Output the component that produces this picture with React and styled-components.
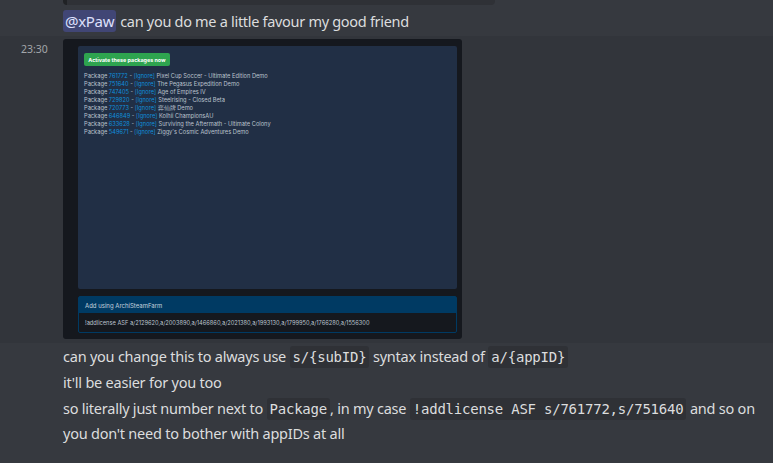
import React from 'react';
import styled, { createGlobalStyle } from 'styled-components';

const GlobalStyle = createGlobalStyle`
  html, body { margin: 0; padding: 0; background: #36393f; }
  body { width: 773px; height: 463px; overflow: hidden; font-family: "Noto Sans", sans-serif; }
`;

const packages = [
  { id: '761772', name: 'Pixel Cup Soccer - Ultimate Edition Demo' },
  { id: '751640', name: 'The Pegasus Expedition Demo' },
  { id: '747405', name: 'Age of Empires IV' },
  { id: '729820', name: 'Steelrising - Closed Beta' },
  { id: '720773', name: '弈仙牌 Demo' },
  { id: '646849', name: 'Kolhii ChampionsAU' },
  { id: '633628', name: 'Surviving the Aftermath - Ultimate Colony' },
  { id: '549671', name: "Ziggy's Cosmic Adventures Demo" },
];

const Page = styled.div`
  width: 773px;
  height: 463px;
  overflow: hidden;
  display: flex;
  flex-direction: column;
  color: #dcddde;
`;

const TopRow = styled.div`
  padding: 0 0 0 63px;
`;

const CutoffEmbed = styled.div`
  width: 432px;
  height: 5px;
  box-sizing: border-box;
  background: #2f3136;
  border-left: 4px solid #202225;
  border-radius: 0 0 4px 4px;
`;

const MentionRow = styled.div`
  height: 31px;
  padding-left: 63px;
  display: flex;
  align-items: center;
  font-size: 14.5px;
  letter-spacing: -0.3px;
  line-height: 22px;
`;

const Mention = styled.span`
  background: #414675;
  color: #dee0fc;
  border-radius: 3px;
  padding: 0 2px;
  margin-right: 4px;
  font-size: 15px;
`;

const HoverRow = styled.div`
  height: 307px;
  background: #32353b;
  display: flex;
`;

const Time = styled.div`
  width: 63px;
  padding: 5px 0 0 21px;
  box-sizing: border-box;
  font-size: 10.5px;
  line-height: 16px;
  color: #a3a6aa;
`;

const Shot = styled.div`
  width: 399px;
  height: 300px;
  margin-top: 3px;
  box-sizing: border-box;
  padding: 7px 5px 6px 15px;
  background: #15181e;
  border-radius: 3px;
  display: flex;
  flex-direction: column;
  gap: 7px;
  font-family: Inter, sans-serif;
  font-size: 5.7px;
  color: #bcc3ce;
`;

const Panel = styled.div`
  flex: 1;
  background: #212f45;
  border-radius: 2px;
  padding: 7px 6px;
`;

const GreenButton = styled.div`
  width: 86px;
  height: 13px;
  background: #2ea44f;
  border-radius: 2px;
  display: flex;
  align-items: center;
  justify-content: center;
  color: #fff;
  font-weight: 700;
  font-size: 5.4px;
`;

const PackageList = styled.div`
  margin-top: 6px;
  line-height: 8px;
`;

const PackageLine = styled.div`
  white-space: nowrap;
`;

const BlueText = styled.span`
  color: #0f8fdc;
`;

const AsfPanel = styled.div`
  height: 37px;
  box-sizing: border-box;
  border: 1px solid #003a63;
  border-radius: 2px;
  display: flex;
  flex-direction: column;
`;

const AsfHeader = styled.div`
  height: 16px;
  background: #003a63;
  padding: 0 6px;
  display: flex;
  align-items: center;
  font-size: 6px;
  color: #c4d2df;
`;

const AsfBody = styled.div`
  flex: 1;
  padding: 0 6px;
  display: flex;
  align-items: center;
  white-space: nowrap;
  font-size: 5.7px;
`;

const Messages = styled.div`
  padding: 1px 0 0 63px;
  font-size: 14.5px;
  letter-spacing: -0.23px;
`;

const Line = styled.div`
  height: 25.8px;
  line-height: 25.8px;
  white-space: nowrap;
`;

const Code = styled.code`
  font-family: "DejaVu Sans Mono", monospace;
  font-size: 14px;
  letter-spacing: -0.23px;
  line-height: 20px;
  background: #2f3136;
  border-radius: 3px;
  padding: 3px 3px;
`;

export default function App() {
  return (
    <Page>
      <GlobalStyle />
      <TopRow><CutoffEmbed /></TopRow>
      <MentionRow>
        <Mention>@xPaw</Mention>can you do me a little favour my good friend
      </MentionRow>
      <HoverRow>
        <Time>23:30</Time>
        <Shot>
          <Panel>
            <GreenButton>Activate these packages now</GreenButton>
            <PackageList>
              {packages.map((p) => (
                <PackageLine key={p.id}>
                  Package <BlueText>{p.id}</BlueText> - <BlueText>[Ignore]</BlueText> {p.name}
                </PackageLine>
              ))}
            </PackageList>
          </Panel>
          <AsfPanel>
            <AsfHeader>Add using ArchiSteamFarm</AsfHeader>
            <AsfBody>!addlicense ASF a/2129620,a/2003890,a/1466860,a/2021380,a/1993130,a/1799950,a/1766280,a/1556300</AsfBody>
          </AsfPanel>
        </Shot>
      </HoverRow>
      <Messages>
        <Line>can you change this to always use <Code>s/{'{subID}'}</Code> syntax instead of <Code>a/{'{appID}'}</Code></Line>
        <Line>it'll be easier for you too</Line>
        <Line>so literally just number next to <Code>Package</Code>, in my case <Code>!addlicense ASF s/761772,s/751640</Code> and so on</Line>
        <Line>you don't need to bother with appIDs at all</Line>
      </Messages>
    </Page>
  );
}
